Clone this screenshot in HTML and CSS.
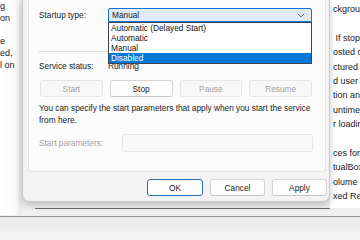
FILE: index.html
```html
<!DOCTYPE html>
<html>
<head>
<meta charset="utf-8">
<link rel="stylesheet" href="styles.css">
</head>
<body>
<div class="desktop">
  <div class="bg-top">
    <div class="bg-left">
      <p>g<br>on</p>
      <p>e<br>ed,<br>l on</p>
    </div>
    <div class="bg-mid"><div class="bg-rule"></div></div>
    <div class="bg-right">
      <p>ckgrou</p>
      <p>&nbsp;If stop<br>osted c<br>ctured<br>d user<br>tion an<br>untime<br>r loadin</p>
      <p>ces for<br>tualBox<br>olume S<br>xed Rea</p>
    </div>
  </div>
  <div class="bg-bottom"></div>

  <div class="dialog">
    <div class="panel">
      <div class="row row-startup">
        <span class="label">Startup type:</span>
        <div class="combo">
          <span class="combo-value">Manual</span>
          <svg class="chev" width="8" height="5" viewBox="0 0 8 5"><path d="M0.8 0.8 L4 4 L7.2 0.8" fill="none" stroke="#5f6670" stroke-width="0.9"/></svg>
          <ul class="dropdown">
            <li>Automatic (Delayed Start)</li>
            <li>Automatic</li>
            <li>Manual</li>
            <li class="selected">Disabled</li>
          </ul>
        </div>
      </div>
      <div class="sep"></div>
      <div class="row row-status">
        <span class="label">Service status:</span>
        <span class="status">Running</span>
      </div>
      <div class="svc-btns">
        <button class="btn disabled">Start</button>
        <button class="btn">Stop</button>
        <button class="btn disabled">Pause</button>
        <button class="btn disabled">Resume</button>
      </div>
      <p class="note">You can specify the start parameters that apply when you start the service from here.</p>
      <div class="row row-params">
        <span class="label label-params">Start parameters:</span>
        <div class="param-input"></div>
      </div>
    </div>
    <div class="footer">
      <button class="btn fbtn default">OK</button>
      <button class="btn fbtn">Cancel</button>
      <button class="btn fbtn">Apply</button>
    </div>
  </div>
</div>
</body>
</html>
```

FILE: styles.css
```css
* { box-sizing: border-box; }
html, body { margin: 0; padding: 0; }
body { width: 360px; height: 240px; overflow: hidden; background: #f0f0f0; }

.desktop {
  position: relative;
  width: 360px;
  height: 240px;
  overflow: hidden;
  font-family: "Liberation Sans", Arial, sans-serif;
  display: flex;
  flex-direction: column;
}

.bg-top {
  height: 217px;
  display: flex;
  border-bottom: 1px solid #8e8e8e;
  background: #efefef;
}
.bg-left {
  width: 22px;
  height: 215px;
  background: linear-gradient(to right, #ffffff 0, #fbfbfb 15px, #e6e6e6 22px);
  padding-top: 1px;
  font-size: 9px;
  line-height: 11.7px;
  color: #1a1a1a;
  overflow: hidden;
}
.bg-left p { margin: 0 0 11.7px 0; }

.bg-mid {
  flex: 1;
  display: flex;
  flex-direction: column;
  justify-content: flex-end;
  padding-left: 13px;
}
.bg-rule {
  border-top: 1px solid #6a6a6a;
  margin-bottom: 7px;
}

.bg-right {
  width: 30px;
  height: 208px;
  background: #ffffff;
  padding: 2px 0 0 3px;
  font-size: 9px;
  line-height: 14.4px;
  color: #1a1a1a;
  white-space: nowrap;
  overflow: hidden;
}
.bg-right p { margin: 0 0 14.4px 0; }

.bg-bottom {
  flex: 1;
  background: linear-gradient(to bottom, #ebebeb 0, #ebebeb 14px, #f4f4f4 15px);
}

/* dialog window over the background app */
.dialog {
  position: absolute;
  left: 22px;
  top: 0;
  width: 308px;
  height: 202px;
  background: #f3f3f3;
  border: 1px solid #c9c9c9;
  border-top: none;
  border-radius: 0 0 7px 7px;
  box-shadow: 0 3px 7px rgba(0,0,0,0.22);
  padding: 0 3px 0 5px;
  display: flex;
  flex-direction: column;
  font-size: 8.3px;
  color: #1b1b1b;
}

.panel {
  height: 172px;
  background: #fbfbfb;
  border: 1px solid #e3e3e3;
  border-top: none;
  border-radius: 0 0 4px 4px;
  padding: 8px 13px 0 10px;
  display: flex;
  flex-direction: column;
}

.row {
  display: flex;
  align-items: center;
  height: 14px;
}
.label { width: 69px; flex: none; }

.combo {
  position: relative;
  flex: 1;
  height: 14px;
  background: #e0ebf7;
  border: 1px solid #0a74d0;
  border-radius: 2px 2px 0 0;
  display: flex;
  align-items: center;
  padding-left: 3px;
}
.combo-value { flex: 1; }
.chev { margin-right: 6px; }

.dropdown {
  position: absolute;
  left: -1px;
  right: -1px;
  top: 13px;
  height: 42px;
  margin: 0;
  padding: 0;
  list-style: none;
  background: #ffffff;
  border: 1px solid #3a4454;
  z-index: 2;
}
.dropdown li {
  height: 10px;
  line-height: 10px;
  padding-left: 2px;
  color: #111;
}
.dropdown li.selected { background: #0078d7; color: #ffffff; }

.sep {
  margin-top: 29px;
  border-top: 1px solid #d6d6d6;
}

.row-status { margin-top: 7px; }
.status { color: #1b1b1b; }

.svc-btns {
  margin-top: 7px;
  margin-left: 1px;
  display: grid;
  grid-template-columns: repeat(4, 1fr);
  gap: 7px;
  height: 17px;
}

.btn {
  font-family: inherit;
  font-size: 8.3px;
  color: #1b1b1b;
  background: #fdfdfd;
  border: 1px solid #d3d3d3;
  border-bottom-color: #c4c4c4;
  border-radius: 3px;
  padding: 0;
  height: 17px;
}
.btn.disabled {
  color: #a3a3a3;
  background: #f8f8f8;
  border-color: #e6e6e6;
}

.note {
  margin: 5px -12px 0 0;
  line-height: 12px;
}

.row-params { margin-top: 8px; height: 18px; }
.label-params { width: 83px; color: #a3a3a3; }
.param-input {
  flex: 1;
  height: 18px;
  margin-right: -1px;
  background: #f9f9f9;
  border: 1px solid #e6e6e6;
  border-radius: 3px;
}

.footer {
  display: flex;
  justify-content: flex-end;
  gap: 7px;
  padding-top: 7px;
  margin-right: -1px;
}
.fbtn { width: 55px; }
.fbtn.default {
  width: 56px;
  border: 1.5px solid #2f6fb3;
}
```
